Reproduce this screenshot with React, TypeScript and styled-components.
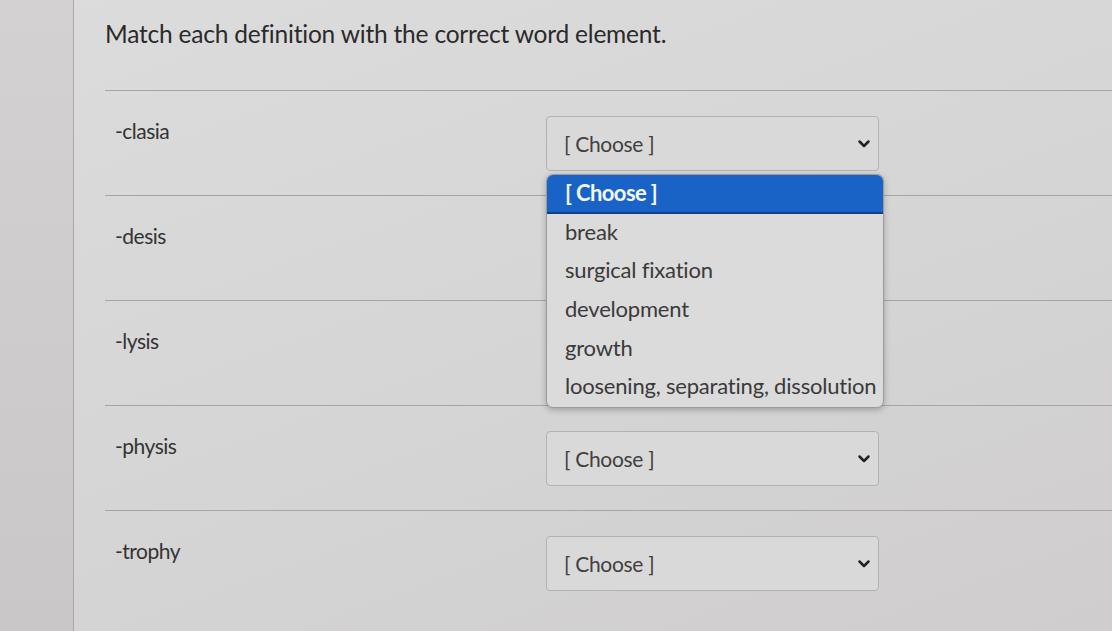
import React from "react";
import styled, { createGlobalStyle } from "styled-components";

const Global = createGlobalStyle`
  html, body { margin: 0; padding: 0; }
  body {
    font-family: Lato, "Open Sans", "Liberation Sans", sans-serif;
    background: #d5d3d4;
    color: #2e2e2e;
  }
`;

const Page = styled.div`
  display: flex;
  width: 1112px;
  height: 631px;
  overflow: hidden;
  background: linear-gradient(160deg, #dddcdc 0%, #d6d5d5 55%, #cfcdce 100%);
`;

const LeftStrip = styled.div`
  width: 73px;
  flex: none;
  background: linear-gradient(180deg, #d3d1d2 0%, #c9c7c8 100%);
  border-right: 1px solid #a9a7a8;
`;

const Main = styled.main`
  flex: 1;
  padding-left: 31px;
  display: flex;
  flex-direction: column;
`;

const Header = styled.div`
  height: 90px;
  box-sizing: border-box;
  padding-top: 19px;
`;

const Title = styled.h1`
  margin: 0;
  font-size: 24.5px;
  line-height: 30px;
  font-weight: 400;
  color: #2a2a2a;
  letter-spacing: -0.2px;
`;

const Row = styled.div`
  display: grid;
  grid-template-columns: 441px 1fr;
  align-items: start;
  height: 105px;
  border-top: 1px solid #a6a4a5;
  box-sizing: border-box;
`;

const Label = styled.div`
  padding: 27px 0 0 10px;
  font-size: 21px;
  line-height: 26px;
  color: #333;
  letter-spacing: -0.5px;
`;

const SelectWrap = styled.div`
  position: relative;
  margin-top: 25px;
  width: 333px;
`;

const SelectBox = styled.div<{ $covered?: boolean }>`
  visibility: ${(p) => (p.$covered ? "hidden" : "visible")};
  height: 55px;
  box-sizing: border-box;
  border: 1px solid #b3b1b2;
  border-radius: 4px;
  background: #dad9d9;
  display: flex;
  align-items: center;
  justify-content: space-between;
  padding: 0 7px 0 17px;
  font-size: 21px;
  color: #404040;
  letter-spacing: -0.3px;
`;

const Chevron = () => (
  <svg width="14" height="10" viewBox="0 0 14 10">
    <path d="M2.5 2.5 L7 7 L11.5 2.5" fill="none" stroke="#222" strokeWidth="2.5" strokeLinecap="round" strokeLinejoin="round" />
  </svg>
);

const List = styled.ul`
  position: absolute;
  top: calc(100% + 3px);
  left: 0;
  width: 338px;
  margin: 0;
  padding: 0;
  list-style: none;
  background: #dcdbdb;
  border: 1px solid #9c9a9b;
  border-radius: 7px;
  box-shadow: 0 2px 6px rgba(0, 0, 0, 0.25);
  overflow: hidden;
  z-index: 5;
  box-sizing: border-box;
`;

const Option = styled.li<{ $active?: boolean }>`
  height: ${(p) => (p.$active ? "39px" : "38.6px")};
  display: flex;
  align-items: center;
  padding: 0 0 ${(p) => (p.$active ? "3px" : "4px")} 18px;
  font-size: 22px;
  font-weight: ${(p) => (p.$active ? 700 : 400)};
  color: ${(p) => (p.$active ? "#f4f8ff" : "#3a3a3a")};
  background: ${(p) => (p.$active ? "#1a63c6" : "transparent")};
  border-bottom: ${(p) => (p.$active ? "2px solid #0f3f86" : "none")};
  box-sizing: border-box;
  white-space: nowrap;
  letter-spacing: ${(p) => (p.$active ? "-0.6px" : "-0.2px")};
`;

const options = [
  "break",
  "surgical fixation",
  "development",
  "growth",
  "loosening, separating, dissolution",
];

const terms = ["-clasia", "-desis", "-lysis", "-physis", "-trophy"];

export default function App() {
  return (
    <Page>
      <Global />
      <LeftStrip />
      <Main>
        <Header>
          <Title>Match each definition with the correct word element.</Title>
        </Header>
        {terms.map((t, i) => (
          <Row key={t}>
            <Label>{t}</Label>
            <SelectWrap>
              <SelectBox $covered={i === 1 || i === 2}>
                <span>[ Choose ]</span>
                <Chevron />
              </SelectBox>
              {i === 0 && (
                <List>
                  <Option $active>[ Choose ]</Option>
                  {options.map((o) => (
                    <Option key={o}>{o}</Option>
                  ))}
                </List>
              )}
            </SelectWrap>
          </Row>
        ))}
      </Main>
    </Page>
  );
}
